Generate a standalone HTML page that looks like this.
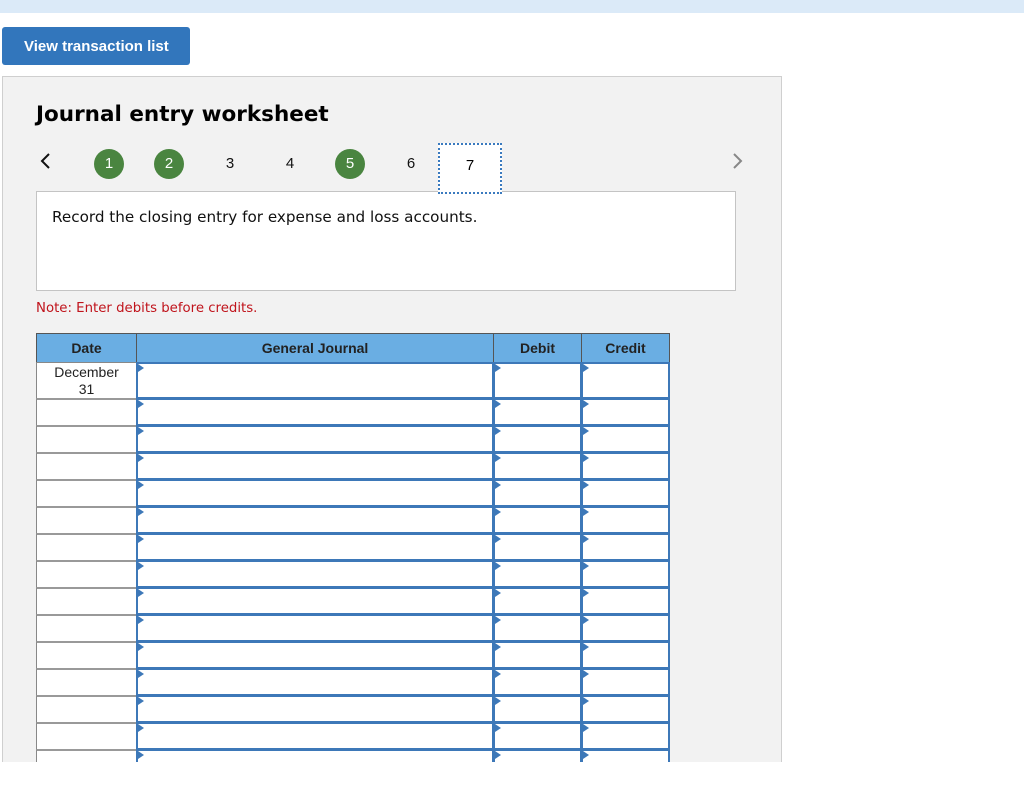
<!DOCTYPE html>
<html><head><style>
*{margin:0;padding:0;box-sizing:border-box}
body{width:1024px;height:796px;background:#fff;position:relative;overflow:hidden;font-family:"Liberation Sans",Arial,sans-serif}
.a{position:absolute}
.top{left:0;top:0;width:1024px;height:13px;background:#dbeaf8}
.btn{left:2px;top:27px;width:188px;height:38px;background:#3276bc;border-radius:3px;color:#fff;font-weight:bold;font-size:15px;line-height:40px;padding-left:22px}
.panel{left:2px;top:76px;width:780px;height:700px;background:#f2f2f2;border:1px solid #cfcfcf}
h1{position:absolute;left:36px;top:102px;font-family:"DejaVu Sans",Verdana,sans-serif;font-size:21.5px;font-weight:bold;color:#000}
.n{top:149px;width:30px;height:30px;line-height:30px;text-align:center;font-size:15px;color:#111}
.g{background:#4a8540;color:#fff;border-radius:50%}
.box7{left:438px;top:143px;width:64px;height:51px;background:#fff;border:2px dotted #3a7abf;text-align:center;line-height:42px;font-size:15px;z-index:5}
.txt{left:36px;top:191px;width:700px;height:100px;background:#fff;border:1px solid #c4c4c4;font-family:"DejaVu Sans",Verdana,sans-serif;font-size:15.2px;padding:16px 0 0 15px;color:#111}
.note{left:36px;top:301px;font-family:"DejaVu Sans",Verdana,sans-serif;font-size:13.3px;color:#c0141c}
.hd{top:333px;height:30px;background:#6aaee3;border:1px solid #555;font-weight:bold;font-size:14px;text-align:center;line-height:28px;color:#222}
.dc{background:#fff;border:1px solid #888;border-top:2px solid #999}
.in{background:#fff;border:2px solid #3d78b8}
.in:before{content:"";position:absolute;left:0;top:0;border-left:6px solid #3d78b8;border-top:4px solid transparent;border-bottom:4px solid transparent}
</style></head><body>
<div class="a top"></div>
<div class="a btn">View transaction list</div>
<div class="a panel"></div>
<h1>Journal entry worksheet</h1>
<svg class="a" style="left:38px;top:152px" width="14" height="18"><path d="M11 2 L4 9 L11 16" stroke="#111" stroke-width="2" fill="none"/></svg>
<div class="a n g" style="left:94px">1</div>
<div class="a n g" style="left:154px">2</div>
<div class="a n" style="left:215px">3</div>
<div class="a n" style="left:275px">4</div>
<div class="a n g" style="left:335px">5</div>
<div class="a n" style="left:396px">6</div>
<div class="a box7">7</div>
<svg class="a" style="left:731px;top:152px" width="14" height="18"><path d="M3 2 L10 9 L3 16" stroke="#888" stroke-width="2" fill="none"/></svg>
<div class="a txt">Record the closing entry for expense and loss accounts.</div>
<div class="a note">Note: Enter debits before credits.</div>
<div class="a hd" style="left:36px;width:101px">Date</div>
<div class="a hd" style="left:136px;width:358px">General Journal</div>
<div class="a hd" style="left:493px;width:89px">Debit</div>
<div class="a hd" style="left:581px;width:89px">Credit</div>
<div class="a" style="left:0;top:362px;width:1024px;height:400px;overflow:hidden" id="rows"></div>
<div class="a" style="left:0;top:762px;width:1024px;height:34px;background:#fff"></div>
<script>
var r=document.getElementById('rows'),h='',y=0;
for(var i=0;i<15;i++){var hh=i==0?36:27;
h+='<div class="a dc" style="left:36px;top:'+y+'px;width:101px;height:'+(hh+1)+'px;'+(i==0?'border-top:1px solid #888;':'')+'font-size:14px;text-align:center;line-height:17px;padding-top:1px;color:#222">'+(i==0?'December<br>31':'')+'</div>';
h+='<div class="a in" style="left:136px;top:'+y+'px;width:358px;height:'+(hh+1)+'px"></div>';
h+='<div class="a in" style="left:493px;top:'+y+'px;width:89px;height:'+(hh+1)+'px"></div>';
h+='<div class="a in" style="left:581px;top:'+y+'px;width:89px;height:'+(hh+1)+'px"></div>';
y+=hh;}
r.innerHTML=h;
</script>
</body></html>
